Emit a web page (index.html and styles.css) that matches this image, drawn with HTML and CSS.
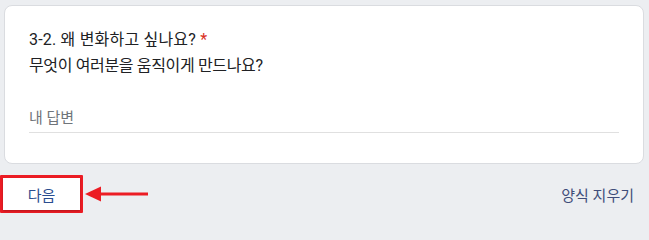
FILE: index.html
```html
<!DOCTYPE html>
<html lang="ko">
<head>
<meta charset="utf-8">
<link rel="stylesheet" href="styles.css">
</head>
<body>
<div class="card">
  <div class="title first">3-2. 왜 변화하고 싶나요? <span class="req">*</span></div>
  <div class="title second">무엇이 여러분을 움직이게 만드나요?</div>
  <div class="answer">내 답변</div>
</div>
<div class="footer">
  <div class="highlight"><button class="next">다음</button></div>
  <svg class="arrow" width="64" height="18" viewBox="0 0 64 18">
    <path d="M15 7.5 H63 V10.5 H15 Z" fill="#ec1c24"/>
    <path d="M0 9 L16 1.5 L16 16.5 Z" fill="#ec1c24"/>
  </svg>
  <span class="clear">양식 지우기</span>
</div>
</body>
</html>
```
FILE: styles.css
```css
html, body {
  margin: 0;
  background: #eceef1;
  font-family: Roboto, "Noto Sans CJK KR", sans-serif;
}
.card {
  box-sizing: border-box;
  margin: 5px 5px 0 4px;
  width: 640px;
  height: 159px;
  background: #fff;
  border: 1px solid #dadce0;
  border-radius: 8px;
  padding: 21px 24px 0 24px;
}
.title {
  font-size: 16px;
  line-height: 26px;
  color: #202124;
}
.first {
  letter-spacing: 0.2px;
}
.second {
  letter-spacing: -0.35px;
}
.req {
  color: #d93025;
}
.answer {
  margin-top: 27px;
  width: 590px;
  font-size: 15px;
  line-height: 24px;
  color: #70757a;
  border-bottom: 1px solid #e0e0e0;
  padding-bottom: 2px;
}
.footer {
  display: flex;
  align-items: center;
  margin-top: 11px;
}
.highlight {
  border: 3px solid #ec1c24;
  width: 77px;
  height: 32px;
  border-radius: 1px;
}
.next {
  display: block;
  width: 100%;
  height: 100%;
  border: none;
  background: #fff;
  box-shadow: 0 1px 2px rgba(0,0,0,0.25);
  font-family: Roboto, "Noto Sans CJK KR", sans-serif;
  font-size: 15px;
  color: #2a4d8f;
  padding: 0;
}
.arrow {
  margin-left: 2px;
  display: block;
}
.clear {
  margin-left: auto;
  margin-right: 15px;
  font-size: 15px;
  color: #3f4d7a;
}
```
